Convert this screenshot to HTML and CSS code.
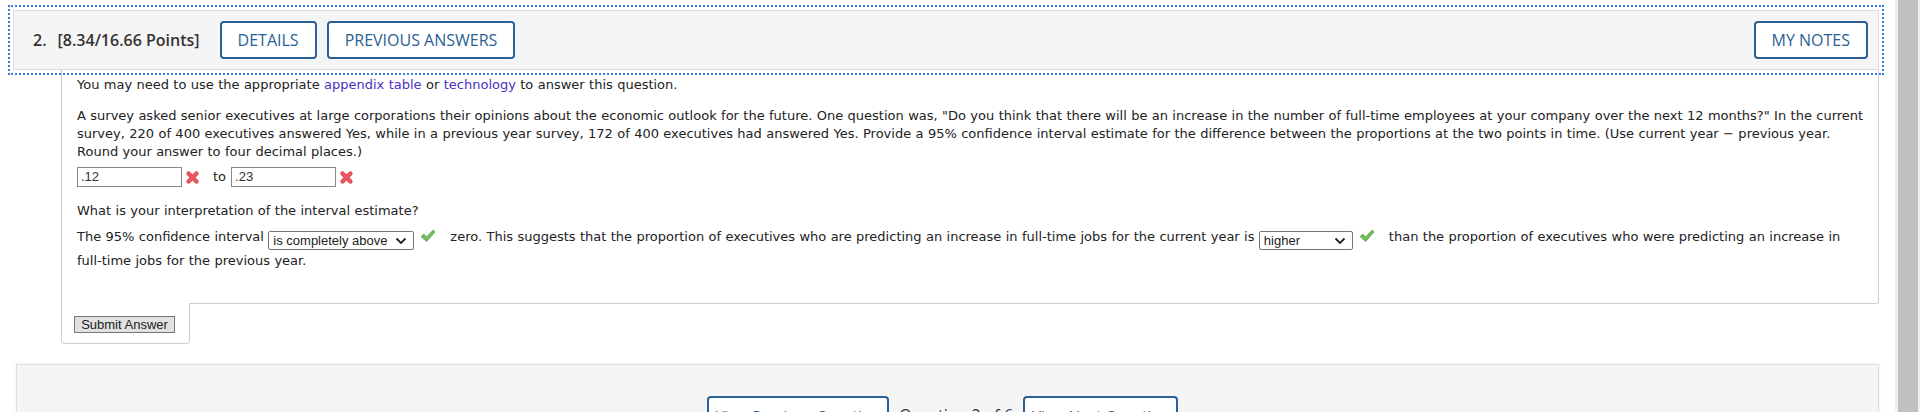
FILE: index.html
```html
<!DOCTYPE html>
<html lang="en">
<head>
<meta charset="utf-8">
<title>Question 2</title>
<link rel="stylesheet" href="styles.css">
</head>
<body>
<div class="screen">
  <main class="page">
    <header class="q-head">
      <span class="q-num">2.</span>
      <span class="q-points">[8.34/16.66 Points]</span>
      <button class="btn-outline btn-first">DETAILS</button>
      <button class="btn-outline">PREVIOUS ANSWERS</button>
      <button class="btn-outline btn-right">MY NOTES</button>
    </header>

    <section class="q-body">
      <p class="line">You may need to use the appropriate <a class="lnk" href="#">appendix table</a> or <a class="lnk" href="#">technology</a> to answer this question.</p>
      <p class="para">A survey asked senior executives at large corporations their opinions about the economic outlook for the future. One question was, "Do you think that there will be an increase in the number of <span class="nw">full-time</span> employees at your company over the next 12 months?" In the current survey, 220 of 400 executives answered Yes, while in a previous year survey, 172 of 400 executives had answered Yes. Provide a 95% confidence interval estimate for the difference between the proportions at the two points in time. (Use current year &minus; previous year. Round your answer to four decimal places.)</p>
      <div class="answers">
        <span class="field">.12</span>
        <svg class="icon-x" width="15" height="15" viewBox="0 0 15 15"><path d="M3.5 3.5 L11.5 11.5 M11.5 3.5 L3.5 11.5" stroke="#d63a41" stroke-width="4.2" stroke-linecap="round"/><path d="M3.5 3.5 L11.5 11.5 M11.5 3.5 L3.5 11.5" stroke="#ee5a60" stroke-width="2.6" stroke-linecap="round"/></svg>
        <span class="to">to</span>
        <span class="field">.23</span>
        <svg class="icon-x" width="15" height="15" viewBox="0 0 15 15"><path d="M3.5 3.5 L11.5 11.5 M11.5 3.5 L3.5 11.5" stroke="#d63a41" stroke-width="4.2" stroke-linecap="round"/><path d="M3.5 3.5 L11.5 11.5 M11.5 3.5 L3.5 11.5" stroke="#ee5a60" stroke-width="2.6" stroke-linecap="round"/></svg>
      </div>
      <p class="line ask">What is your interpretation of the interval estimate?</p>
      <p class="para interp">The 95% confidence interval <span class="sel sel-wide"><span class="sel-text">is completely above</span><svg width="12" height="8" viewBox="0 0 12 8"><path d="M1.5 1.5 L6 6 L10.5 1.5" fill="none" stroke="#222" stroke-width="1.8"/></svg></span><svg class="icon-ok" width="16" height="14" viewBox="0 0 16 14"><path d="M1 7.5 L4 5.2 L6.6 8 L13.2 1 L15 3 L6.6 12.6 Z" fill="#72bd5f" stroke="#4f9a40" stroke-width="0.7" stroke-linejoin="round"/></svg><span class="after-ok">zero. This suggests that the proportion of executives who are predicting an increase in <span class="nw">full-time</span> jobs for the current year is</span> <span class="sel sel-narrow"><span class="sel-text">higher</span><svg width="12" height="8" viewBox="0 0 12 8"><path d="M1.5 1.5 L6 6 L10.5 1.5" fill="none" stroke="#222" stroke-width="1.8"/></svg></span><svg class="icon-ok" width="16" height="14" viewBox="0 0 16 14"><path d="M1 7.5 L4 5.2 L6.6 8 L13.2 1 L15 3 L6.6 12.6 Z" fill="#72bd5f" stroke="#4f9a40" stroke-width="0.7" stroke-linejoin="round"/></svg><span class="after-ok">than the proportion of executives who were predicting an increase in <span class="nw">full-time</span> jobs for the previous year.</span></p>
    </section>
    <div class="submit-tab">
      <button class="btn-submit">Submit Answer</button>
    </div>

    <nav class="q-nav">
      <button class="btn-outline btn-nav">View Previous Question</button>
      <span class="nav-label">Question 2 of 6</span>
      <button class="btn-outline btn-nav">View Next Question</button>
    </nav>
  </main>
  <div class="scrollbar"><div class="thumb"></div></div>
</div>
</body>
</html>
```

FILE: styles.css
```css
* { box-sizing: border-box; }
html, body { margin: 0; padding: 0; background: #fff; }
body { font-family: "DejaVu Sans", Verdana, sans-serif; color: #222; overflow: hidden; }

.screen { display: flex; width: 1920px; height: 412px; overflow: hidden; }
.page { flex: 1; padding: 10px 16px 0 13px; min-width: 0; }

.q-head {
  display: flex; align-items: center;
  height: 60px; padding: 10px 10px 10px 19px;
  background: #f5f5f5; border: 1px solid #dcdcdc;
  outline: 2px dotted #3b7de3; outline-offset: 3px;
  font-family: "Open Sans", sans-serif;
}
.q-num { font-size: 16px; font-weight: 650; color: #333; margin-right: 11px; }
.q-points { font-size: 16px; font-weight: 650; color: #333; margin-right: 20px; }

.btn-outline {
  font-family: "Open Sans", sans-serif; font-size: 16px; font-weight: 500;
  color: #2a5f96; background: #fff;
  border: 2px solid #2b6198; border-radius: 4px;
  height: 38px; padding: 0 16px; margin: 0; cursor: pointer;
}
.btn-outline + .btn-outline { margin-left: 10px; }
.btn-right { margin-left: auto !important; }

.q-body {
  margin-left: 48px;
  border: 1px solid #cfcfcf; border-top: 0;
  border-bottom-right-radius: 3px;
  padding: 6px 8px 32px 15px;
  font-size: 13px; line-height: 18px; word-spacing: 0.25px;
}
.q-body p { margin: 0; }
.para { margin-top: 13px !important; }
.lnk { color: #4a2fc0; text-decoration: none; }
.nw { white-space: nowrap; }

.answers { display: flex; align-items: center; height: 20px; margin-top: 6px; }
.field {
  display: inline-flex; align-items: center;
  width: 105px; height: 20px; padding: 0 3px;
  border: 1px solid #8a8a8a;
  font-family: "Liberation Sans", Arial, sans-serif; font-size: 13px; color: #333;
}
.icon-x { margin-left: 3px; }
.to { margin: 0 5px 0 13px; }

.ask { margin-top: 15px !important; }
.interp { margin-top: 6px !important; line-height: 21px; }
.sel {
  display: inline-flex; align-items: center; justify-content: space-between;
  height: 19px; padding: 0 6px 0 4px; vertical-align: -4px;
  border: 1px solid #767676; border-radius: 2px; background: #fff;
  font-family: "Liberation Sans", Arial, sans-serif; font-size: 13px; color: #222;
  word-spacing: 0;
}
.sel-wide { width: 146px; }
.sel-narrow { width: 94px; }
.icon-ok { margin: 0 14px 0 6px; vertical-align: -2px; }

.submit-tab {
  width: 129px; margin-left: 48px; margin-top: -1px;
  position: relative; background: #fff;
  border: 1px solid #cfcfcf; border-top: 0;
  border-radius: 0 0 4px 4px;
  padding: 13px 13px 10px 12px;
}
.btn-submit {
  display: block; width: 101px; height: 17px; padding: 0; margin: 0;
  font-family: "Liberation Sans", Arial, sans-serif; font-size: 13px; color: #222;
  background: #e1e1e1; border: 1px solid #767676; border-radius: 0;
  line-height: 15px;
}

.q-nav {
  display: flex; justify-content: center; align-items: flex-start; gap: 10px;
  margin: 20px 0 0 3px; height: 80px; padding-top: 31px; padding-right: 10px;
  background: #f5f5f5; border: 1px solid #dedede;
  box-shadow: 0 0 3px rgba(0,0,0,0.08);
  font-family: "Open Sans", sans-serif;
}
.btn-outline.btn-nav { font-size: 15px; font-weight: 400; padding: 0 7px; margin-left: 0; }
.nav-label { font-size: 16px; color: #333; line-height: 38px; }

.scrollbar { width: 25px; background: #f1f1f1; padding: 0 2px 0 3px; }
.thumb { height: 100%; background: #c1c1c1; }
```
